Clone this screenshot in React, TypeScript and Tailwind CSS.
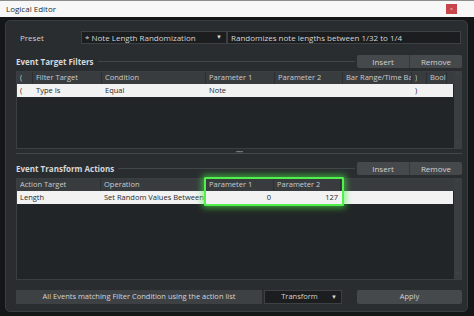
import React from "react"

const font = { fontFamily: '"Open Sans", "Noto Sans", sans-serif' }

function SectionHead({ title }: { title: string }) {
  return (
    <div className="flex items-center h-[13px]">
      <span className="text-[8px] font-bold text-[#d6d8da] whitespace-nowrap">{title}</span>
      <div className="flex-1 h-px bg-[#44474a] ml-[4px] mr-[2px]" />
      <div className="flex w-[105px] h-[13px] bg-[#46494c] rounded-[2px] text-[8px] text-[#cfd1d3]">
        <div className="flex-1 flex items-center justify-center border-r border-[#36393c]">Insert</div>
        <div className="flex-1 flex items-center justify-center">Remove</div>
      </div>
    </div>
  )
}

function Scroll() {
  return (
    <div className="w-[7px] ml-auto bg-[#3b3e41] flex flex-col justify-between items-center py-[1px]">
      <span className="text-[5px] leading-none text-[#6a6d70]">˄</span>
      <span className="text-[5px] leading-none text-[#6a6d70]">˅</span>
    </div>
  )
}

type Col = { label: string; w: number }

const filterCols: Col[] = [
  { label: "(", w: 16 },
  { label: "Filter Target", w: 69 },
  { label: "Condition", w: 104 },
  { label: "Parameter 1", w: 69 },
  { label: "Parameter 2", w: 68 },
  { label: "Bar Range/Time Base", w: 69 },
  { label: ")", w: 15 },
  { label: "Bool", w: 20 },
]

const filterRow = ["(", "Type Is", "Equal", "Note", "", "", ")", ""]

const actionCols: Col[] = [
  { label: "Action Target", w: 84 },
  { label: "Operation", w: 105 },
  { label: "Parameter 1", w: 68 },
  { label: "Parameter 2", w: 67 },
]

export default function App() {
  return (
    <div style={font} className="w-[474px] h-[316px] bg-[#141618] flex flex-col overflow-hidden">
      {/* title bar */}
      <div className="h-[17px] bg-[#f7f7f7] border-t border-[#8c8c8c] flex items-center pl-[6px] pr-[17px]">
        <span className="text-[8px] text-[#2a2a2a]">Logical Editor</span>
        <div className="ml-auto w-[11px] h-[10px] bg-[#c8454b] flex items-center justify-center">
          <span className="text-[6px] leading-none text-[#f3c4c4]">×</span>
        </div>
      </div>

      <div className="flex-1 pt-[3px] pl-[5px] pr-[6px] pb-[4px] bg-[#141618]">
        <div className="h-full rounded-[5px] border border-[#3a3d40] bg-[#2a2d30] pt-[10px] pl-[10px] pr-[5px] flex flex-col">
          {/* preset row */}
          <div className="flex items-center h-[13px] pl-[4px] pr-[1px]">
            <span className="w-[61px] text-[8px] text-[#d0d2d4]">Preset</span>
            <div className="w-[146px] h-[13px] bg-[#1b1d1f] border border-[#3e4144] flex items-center pl-[3px] pr-[4px]">
              <span className="text-[8px] text-[#d4d6d8] whitespace-nowrap">* Note Length Randomization</span>
              <span className="ml-auto text-[6px] text-[#d8d8d8]">▼</span>
            </div>
            <div className="flex-1 h-[13px] bg-[#1b1d1f] border border-[#3e4144] flex items-center pl-[3px]">
              <span className="text-[8px] text-[#d4d6d8] whitespace-nowrap">Randomizes note lengths between 1/32 to 1/4</span>
            </div>
          </div>

          <div className="mt-[11px]">
            <SectionHead title="Event Target Filters" />
          </div>

          {/* filter table */}
          <div className="mt-[3px] h-[78px] border border-[#3c3f42] bg-[#222527] flex">
            <div className="flex-1 flex flex-col">
              <div className="flex h-[12px] bg-[#393c3f]">
                {filterCols.map((c, i) => (
                  <div
                    key={i}
                    style={{ width: c.w }}
                    className="flex items-center pl-[3px] border-r border-[#2c2f32] text-[7.5px] text-[#c9cbcd] whitespace-nowrap overflow-hidden"
                  >
                    <span className="block overflow-hidden">{c.label}</span>
                  </div>
                ))}
              </div>
              <div className="flex h-[13px] bg-[#f2f2f2] mr-[1px]">
                {filterRow.map((t, i) => (
                  <div
                    key={i}
                    style={{ width: filterCols[i].w }}
                    className="flex items-center pl-[3px] text-[7.5px] text-[#2a2a2a] whitespace-nowrap"
                  >
                    {t}
                  </div>
                ))}
              </div>
            </div>
            <Scroll />
          </div>

          {/* splitter */}
          <div className="mt-[4px] h-px bg-[#45484b] flex justify-center">
            <span className="-mt-[4px] text-[6px] leading-none tracking-[-1px] text-[#8a8d90]">•••••</span>
          </div>

          <div className="mt-[8px]">
            <SectionHead title="Event Transform Actions" />
          </div>

          {/* action table */}
          <div className="relative mt-[3px] h-[102px] border border-[#3c3f42] bg-[#222527] flex">
            <div className="flex-1 flex flex-col">
              <div className="flex h-[12px] bg-[#393c3f]">
                {actionCols.map((c, i) => (
                  <div
                    key={i}
                    style={{ width: c.w }}
                    className="flex items-center pl-[3px] border-r border-[#2c2f32] text-[7.5px] text-[#c9cbcd] whitespace-nowrap"
                  >
                    {c.label}
                  </div>
                ))}
              </div>
              <div className="flex h-[13px] bg-[#f2f2f2] mr-[1px] text-[7.5px] text-[#2a2a2a]">
                <div className="w-[84px] flex items-center pl-[3px]">Length</div>
                <div className="w-[105px] flex items-center pl-[3px] whitespace-nowrap">Set Random Values Between</div>
                <div className="w-[68px] flex items-center justify-end pr-[3px]">0</div>
                <div className="w-[67px] flex items-center justify-end pr-[3px]">127</div>
              </div>
            </div>
            <Scroll />
            {/* highlight */}
            <div className="absolute left-[187px] top-[-2px] w-[140px] h-[29px] border-2 border-[#52f04c] rounded-[1px] shadow-[0_0_6px_2px_rgba(70,240,70,0.6)]" />
          </div>

          {/* bottom bar */}
          <div className="mt-[10px] flex items-center h-[14px]">
            <div className="w-[246px] h-[14px] bg-[#3e4144] flex items-center justify-center">
              <span className="text-[7.5px] text-[#d2d4d6] whitespace-nowrap">All Events matching Filter Condition using the action list</span>
            </div>
            <div className="ml-[2px] w-[78px] h-[14px] bg-[#1b1d1f] border border-[#3e4144] flex items-center pl-[3px] pr-[4px]">
              <span className="flex-1 text-center text-[7.5px] text-[#d4d6d8]">Transform</span>
              <span className="text-[6px] text-[#d8d8d8]">▼</span>
            </div>
            <div className="ml-auto w-[105px] h-[14px] bg-[#46494c] rounded-[2px] flex items-center justify-center">
              <span className="text-[7.5px] text-[#cfd1d3]">Apply</span>
            </div>
          </div>
        </div>
      </div>
    </div>
  )
}
